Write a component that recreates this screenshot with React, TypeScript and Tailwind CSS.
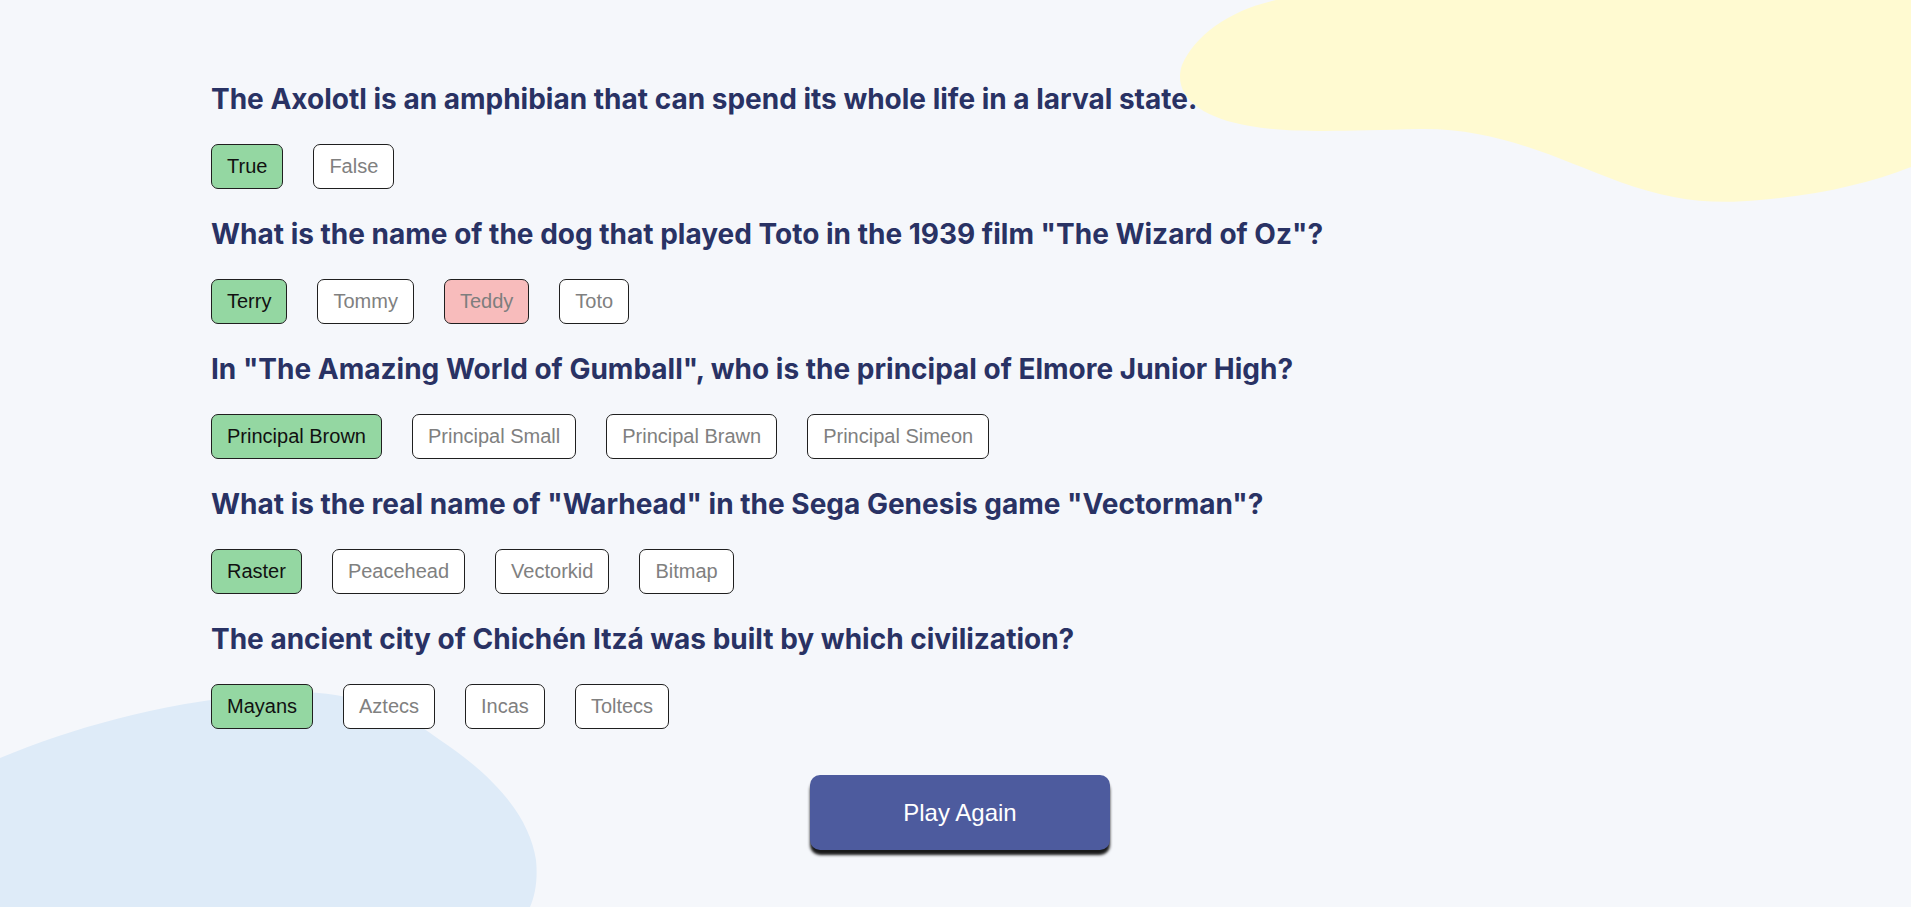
import React from "react";

type Q = { q: string; answers: { t: string; s: "correct" | "wrong" | "none" }[] };

const questions: Q[] = [
  {
    q: "The Axolotl is an amphibian that can spend its whole life in a larval state.",
    answers: [
      { t: "True", s: "correct" },
      { t: "False", s: "none" },
    ],
  },
  {
    q: 'What is the name of the dog that played Toto in the 1939 film "The Wizard of Oz"?',
    answers: [
      { t: "Terry", s: "correct" },
      { t: "Tommy", s: "none" },
      { t: "Teddy", s: "wrong" },
      { t: "Toto", s: "none" },
    ],
  },
  {
    q: 'In "The Amazing World of Gumball", who is the principal of Elmore Junior High?',
    answers: [
      { t: "Principal Brown", s: "correct" },
      { t: "Principal Small", s: "none" },
      { t: "Principal Brawn", s: "none" },
      { t: "Principal Simeon", s: "none" },
    ],
  },
  {
    q: 'What is the real name of "Warhead" in the Sega Genesis game "Vectorman"?',
    answers: [
      { t: "Raster", s: "correct" },
      { t: "Peacehead", s: "none" },
      { t: "Vectorkid", s: "none" },
      { t: "Bitmap", s: "none" },
    ],
  },
  {
    q: "The ancient city of Chichén Itzá was built by which civilization?",
    answers: [
      { t: "Mayans", s: "correct" },
      { t: "Aztecs", s: "none" },
      { t: "Incas", s: "none" },
      { t: "Toltecs", s: "none" },
    ],
  },
];

function Answer({ t, s }: { t: string; s: "correct" | "wrong" | "none" }) {
  const cls =
    s === "correct"
      ? "bg-[#94D7A2] text-[#111111]"
      : s === "wrong"
      ? "bg-[#F8BCBC] text-[#7e7e7e]"
      : "bg-white text-[#808080]";
  return (
    <div
      className={`px-[15px] py-[10px] text-[20px] leading-[23px] rounded-[7px] border border-[#1f1f1f] ${cls}`}
      style={{ fontFamily: '"Liberation Sans", Arial, sans-serif' }}
    >
      {t}
    </div>
  );
}

export default function App() {
  return (
    <div className="relative min-h-[907px] w-full overflow-hidden bg-[#F5F7FB]">
      <svg
        className="absolute inset-0 w-full h-full"
        viewBox="0 0 1911 907"
        preserveAspectRatio="none"
      >
        <path
          fill="#FFFAD1"
          d="M1276 0 C1230 10, 1195 35, 1182 65 C1172 95, 1200 118, 1250 126 C1290 133, 1340 131, 1420 129 C1500 128, 1560 160, 1620 182 C1670 200, 1710 205, 1760 200 C1820 195, 1870 183, 1911 167 L1911 0 Z"
        />
        <path
          fill="#DEEBF8"
          d="M0 758 C80 725, 170 700, 285 692 C350 690, 400 710, 440 740 C500 780, 530 820, 536 860 C538 880, 535 895, 530 907 L0 907 Z"
        />
      </svg>
      <div className="relative ml-[211px] w-[1498px] pt-[82px] flex flex-col">
        <div className="flex flex-col gap-[28px]">
          {questions.map((q, i) => (
            <div key={i} className="flex flex-col">
              <h2
                className="text-[28px] leading-[34px] font-bold text-[#293264] mb-[28px]"
                style={{ fontFamily: "Inter, sans-serif" }}
              >
                {q.q}
              </h2>
              <div className="flex gap-[30px]">
                {q.answers.map((a, j) => (
                  <Answer key={j} t={a.t} s={a.s} />
                ))}
              </div>
            </div>
          ))}
        </div>
        <button
          className="mt-[46px] mx-auto w-[300px] h-[75px] rounded-[10px] bg-[#4D5B9E] text-white text-[24px] shadow-[0_5px_3px_rgba(0,0,0,0.9)]"
          style={{ fontFamily: '"Liberation Sans", Arial, sans-serif' }}
        >
          Play Again
        </button>
      </div>
    </div>
  );
}
